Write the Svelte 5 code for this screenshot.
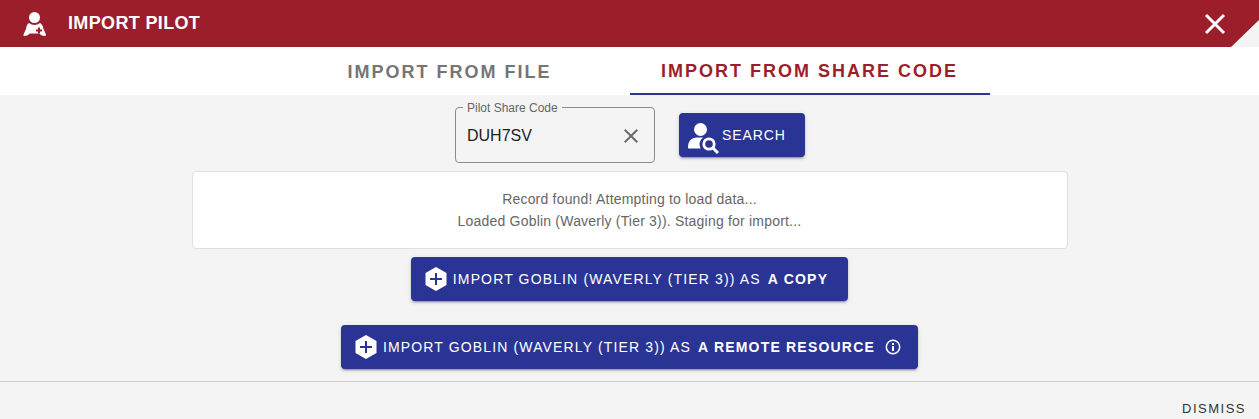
<script>
  const rows = [
    { label: 'IMPORT GOBLIN (WAVERLY (TIER 3)) AS', bold: 'A COPY', info: false },
    { label: 'IMPORT GOBLIN (WAVERLY (TIER 3)) AS', bold: 'A REMOTE RESOURCE', info: true }
  ];
</script>

<div class="dialog">
  <header class="title-bar">
    <svg class="pilot-icon" viewBox="23 8 24 26" width="24" height="26" aria-hidden="true">
      <circle cx="34.500" cy="14.500" r="5.500" fill="#fff"/>
      <path fill="#fff" d="M29 20Q31.500 22 34.500 22T40 20C42 21 43 23 43.500 26L46 31.500Q46.200 33 44.500 33 42 33 39 30.500H30Q27 33 24.500 33 23 33 23.500 31.500L26 26C26.500 23 27 21 29 20z"/>
      <path fill="#9b1e2a" d="M38 24.500h2v2h2v2h-2v2h-2v-2h-2v-2h2z"/>
    </svg>
    <span class="title">IMPORT PILOT</span>
    <svg class="close" viewBox="0 0 22 22" width="22" height="22" aria-hidden="true">
      <path d="M2 2 20 20M20 2 2 20" stroke="#fff" stroke-width="3" fill="none"/>
    </svg>
  </header>

  <nav class="tabs">
    <div class="tab">IMPORT FROM FILE</div>
    <div class="tab active">IMPORT FROM SHARE CODE</div>
  </nav>

  <main class="body">
    <div class="search-row">
      <fieldset class="field">
        <legend>Pilot Share Code</legend>
        <span class="value">DUH7SV</span>
        <svg viewBox="0 0 24 24" width="24" height="24" aria-hidden="true">
          <path fill="#6b6b6b" d="M19 6.410 17.590 5 12 10.590 6.410 5 5 6.410 10.590 12 5 17.590 6.410 19 12 13.410 17.590 19 19 17.590 13.410 12z"/>
        </svg>
      </fieldset>
      <button class="btn search">
        <svg viewBox="0 0 31 31" width="31" height="31" aria-hidden="true">
          <circle cx="12.500" cy="6.500" r="6.500" fill="#fff"/>
          <path fill="#fff" d="M0 24.500C0 18 3.500 14.500 9 14.500h6a9.500 9.500 0 0 0-2.500 11H1C.3 25.500 0 25 0 24.500z"/>
          <circle cx="21" cy="21" r="5.200" fill="none" stroke="#fff" stroke-width="2.800"/>
          <path d="M24.500 24.500 30 30" stroke="#fff" stroke-width="3" fill="none"/>
        </svg>
        <span>SEARCH</span>
      </button>
    </div>

    <div class="log">
      <p>Record found! Attempting to load data...</p>
      <p>Loaded Goblin (Waverly (Tier 3)). Staging for import...</p>
    </div>

    <div class="actions">
      {#each rows as row}
        <button class="btn import">
          <svg viewBox="0 0 22 24" width="22" height="24" aria-hidden="true">
            <path fill="#fff" d="M11 0 21.500 6v12L11 24 .5 18V6z"/>
            <path fill="#2a3494" d="M10 6h2v5h5v2h-5v5h-2v-5H5v-2h5z"/>
          </svg>
          <span class="label">{row.label}</span>
          <b>{row.bold}</b>
          {#if row.info}
            <svg class="info" viewBox="0 0 16 16" width="16" height="16" aria-hidden="true">
              <circle cx="8" cy="8" r="6.700" fill="none" stroke="#fff" stroke-width="1.500"/>
              <path fill="#fff" d="M7 7h2v5H7zM7 4h2v2H7z"/>
            </svg>
          {/if}
        </button>
      {/each}
    </div>
  </main>

  <footer class="footer">
    <span>DISMISS</span>
  </footer>
</div>

<style>
  :global(body) {
    margin: 0;
    background: #f4f4f4;
  }

  .dialog {
    height: 419px;
    display: flex;
    flex-direction: column;
    background: #f4f4f4;
    font-family: "Liberation Sans", Arial, sans-serif;
    overflow: hidden;
  }

  .title-bar {
    height: 47px;
    flex: none;
    display: flex;
    align-items: center;
    padding: 0 33px 0 23px;
    background: #9b1e2a;
    clip-path: polygon(0 0, 100% 0, 100% 20px, calc(100% - 28px) 100%, 0 100%);
  }

  .pilot-icon {
    margin-right: 21px;
  }

  .title {
    flex: 1;
    color: #fff;
    font-size: 18px;
    font-weight: 700;
    letter-spacing: .35px;
  }

  .tabs {
    height: 48px;
    flex: none;
    display: flex;
    justify-content: center;
    background: #fff;
  }

  .tab {
    width: 360px;
    display: flex;
    align-items: center;
    justify-content: center;
    box-sizing: border-box;
    padding-top: 2px;
    color: #757575;
    font-size: 18px;
    font-weight: 700;
    letter-spacing: 2px;
  }

  .tab.active {
    color: #9b1e2a;
    border-bottom: 2px solid #2a3494;
  }

  .body {
    flex: 1;
    display: flex;
    flex-direction: column;
    align-items: center;
  }

  .search-row {
    display: flex;
    align-items: flex-start;
    gap: 24px;
    height: 76px;
    margin-left: 1px;
  }

  .field {
    box-sizing: border-box;
    width: 200px;
    height: 63px;
    margin: 5px 0 0;
    padding: 0 11px 4px;
    border: 1px solid #8c8c8c;
    border-radius: 4px;
    display: flex;
    align-items: center;
    justify-content: space-between;
  }

  .field legend {
    padding: 2px 4px 0;
    margin-left: -4px;
    font-size: 12px;
    line-height: 12px;
    color: #666;
  }

  .value {
    font-size: 16px;
    color: #212121;
  }

  .btn {
    border: 0;
    border-radius: 4px;
    background: #2a3494;
    color: #fff;
    font-family: inherit;
    display: flex;
    align-items: center;
    box-shadow: 0 3px 1px -2px rgba(0,0,0,.2), 0 2px 2px 0 rgba(0,0,0,.14), 0 1px 5px 0 rgba(0,0,0,.12);
  }

  .search {
    width: 126px;
    height: 44px;
    margin-top: 18px;
    padding: 0 0 0 9px;
    gap: 3px;
    font-size: 14px;
    letter-spacing: .9px;
  }

  .search svg {
    margin-top: 7px;
  }

  .log {
    box-sizing: border-box;
    width: 876px;
    height: 78px;
    padding: 16px 16px 0;
    background: #fff;
    border: 1px solid #e0e0e0;
    border-radius: 4px;
    color: #666;
    font-size: 14px;
    line-height: 22px;
    letter-spacing: .2px;
    text-align: center;
  }

  .log p {
    margin: 0;
  }

  .actions {
    display: flex;
    flex-direction: column;
    align-items: center;
    gap: 24px;
    margin-top: 8px;
  }

  .import {
    height: 44px;
    padding: 0 20px 0 14px;
    font-size: 14px;
    letter-spacing: 1.140px;
    white-space: pre;
  }

  .import .label {
    margin-left: 6px;
  }

  .import b {
    margin-left: 7px;
    font-weight: 700;
    letter-spacing: 1.200px;
  }

  .info {
    margin: 0 -3px 0 10px;
  }

  .footer {
    flex: none;
    height: 38px;
    border-top: 1px solid #cfcfcf;
    display: flex;
    align-items: center;
    justify-content: flex-end;
    padding: 15px 13px 0 0;
    box-sizing: border-box;
    color: #333;
    font-size: 13px;
    letter-spacing: 1.500px;
  }
</style>
